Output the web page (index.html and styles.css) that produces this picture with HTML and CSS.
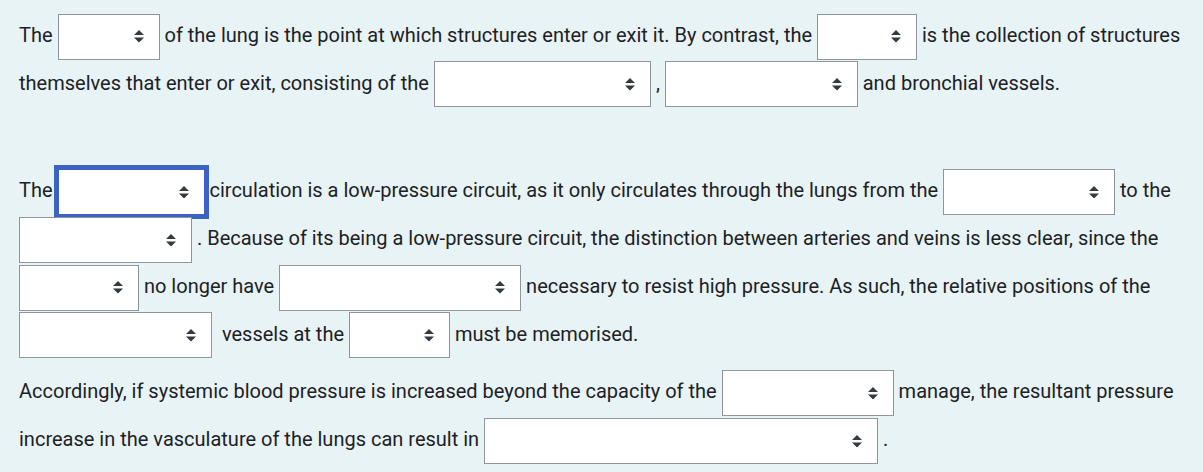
FILE: index.html
```html
<!DOCTYPE html>
<html lang="en">
<head>
<meta charset="utf-8">
<title>Gap select question</title>
<link rel="stylesheet" href="styles.css">
</head>
<body>
<div class="qtext">
  <p class="para first">The <span class="gap w102"><svg viewBox="0 0 4 5" class="arrow"><path d="M2 0L0 2h4zm0 5L0 3h4z"/></svg></span> of the lung is the point at which structures enter or exit it. By contrast, the <span class="gap w100"><svg viewBox="0 0 4 5" class="arrow"><path d="M2 0L0 2h4zm0 5L0 3h4z"/></svg></span> is the collection of structures themselves that enter or exit, consisting of the <span class="gap w217"><svg viewBox="0 0 4 5" class="arrow"><path d="M2 0L0 2h4zm0 5L0 3h4z"/></svg></span> , <span class="gap w193"><svg viewBox="0 0 4 5" class="arrow"><path d="M2 0L0 2h4zm0 5L0 3h4z"/></svg></span> and bronchial vessels.</p>
  <p class="para">The <span class="gap w147 focus"><svg viewBox="0 0 4 5" class="arrow"><path d="M2 0L0 2h4zm0 5L0 3h4z"/></svg></span> circulation is a low-pressure circuit, as it only circulates through the lungs from the <span class="gap w172"><svg viewBox="0 0 4 5" class="arrow"><path d="M2 0L0 2h4zm0 5L0 3h4z"/></svg></span> to the <span class="gap w173"><svg viewBox="0 0 4 5" class="arrow"><path d="M2 0L0 2h4zm0 5L0 3h4z"/></svg></span> . Because of its being a low-pressure circuit, the distinction between arteries and veins is less clear, since the <span class="gap w120"><svg viewBox="0 0 4 5" class="arrow"><path d="M2 0L0 2h4zm0 5L0 3h4z"/></svg></span> no longer have <span class="gap w242"><svg viewBox="0 0 4 5" class="arrow"><path d="M2 0L0 2h4zm0 5L0 3h4z"/></svg></span> necessary to resist high pressure. As such, the relative positions of the <span class="gap w193"><svg viewBox="0 0 4 5" class="arrow"><path d="M2 0L0 2h4zm0 5L0 3h4z"/></svg></span> &nbsp;vessels at the <span class="gap w101"><svg viewBox="0 0 4 5" class="arrow"><path d="M2 0L0 2h4zm0 5L0 3h4z"/></svg></span> must be memorised.</p>
  <p class="para">Accordingly, if systemic blood pressure is increased beyond the capacity of the <span class="gap w172"><svg viewBox="0 0 4 5" class="arrow"><path d="M2 0L0 2h4zm0 5L0 3h4z"/></svg></span> manage, the resultant pressure increase in the vasculature of the lungs can result in <span class="gap w394"><svg viewBox="0 0 4 5" class="arrow"><path d="M2 0L0 2h4zm0 5L0 3h4z"/></svg></span> .</p>
</div>
</body>
</html>
```
FILE: styles.css
```css
html, body {
  margin: 0;
  padding: 0;
}
body {
  background: #e7f3f5;
  color: #1d2125;
  font-family: Roboto, "Noto Sans", "Liberation Sans", sans-serif;
  font-size: 20px;
}
.qtext {
  padding: 12px 15px 0 19px;
}
.para {
  margin: 0 0 10px 0;
  line-height: 47.5px;
}
.para.first {
  margin-bottom: 60px;
}
.gap {
  display: inline-flex;
  align-items: center;
  justify-content: flex-end;
  box-sizing: border-box;
  height: 46px;
  padding-right: 15px;
  background: #fff;
  border: 1px solid #8f959e;
  vertical-align: middle;
  line-height: normal;
}
.gap.focus {
  border-color: #3b63c4;
  box-shadow: 0 0 0 4px #3b63c4;
}
.arrow {
  width: 10px;
  height: 12.5px;
  fill: #343a40;
}
.w100 { width: 100px; }
.w101 { width: 101px; }
.w102 { width: 102px; }
.w120 { width: 120px; }
.w147 { width: 147px; }
.w172 { width: 172px; }
.w173 { width: 173px; }
.w193 { width: 193px; }
.w217 { width: 217px; }
.w242 { width: 242px; }
.w394 { width: 394px; }
```
